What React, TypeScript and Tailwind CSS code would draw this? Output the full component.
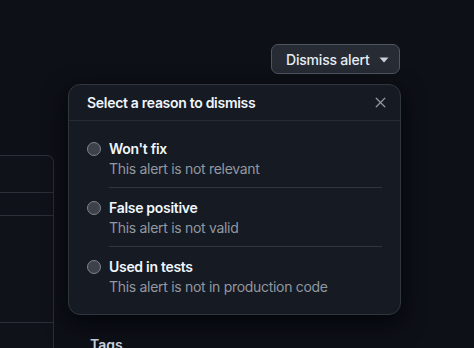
import { X } from "lucide-react";

const reasons = [
    { id: "wont_fix", title: "Won't fix", desc: "This alert is not relevant" },
    { id: "false_positive", title: "False positive", desc: "This alert is not valid" },
    { id: "used_in_tests", title: "Used in tests", desc: "This alert is not in production code" },
];

function DismissPopover() {
    return (
        <div className="absolute left-[68px] top-[84px] w-[333px] h-[231px] rounded-[12px] border border-[#30363d] bg-[#161a22] shadow-[0_8px_24px_rgba(1,4,9,0.85)] tracking-[-0.3px]">
            {/* header */}
            <div className="flex h-[36px] items-center justify-between border-b border-[#262b33] pl-[18px] pr-[10px]">
                <h3 className="text-[14px] font-semibold text-[#f0f6fc]">Select a reason to dismiss</h3>
                <button type="button" className="flex h-[20px] w-[20px] items-center justify-center text-[#9198a1]">
                    <X size={17} strokeWidth={1.8} />
                </button>
            </div>
            {/* options */}
            <div className="px-[18px] pt-[18px]">
                {reasons.map((r, k) => (
                    <label key={r.id} className="flex gap-[8px]">
                        <span className={`mt-[3px] flex h-[14px] w-[14px] shrink-0 items-center justify-center ${k === 0 ? "" : "mt-[13px]"}`}>
                            <span className="h-[14px] w-[14px] rounded-full border-[1.5px] border-[#7d848d] bg-[#3c414a]" />
                        </span>
                        <div className={`flex-1 ${k < reasons.length - 1 ? "border-b border-[#30363d] pb-[8px]" : ""} ${k === 0 ? "" : "pt-[10px]"}`}>
                            <div className="text-[14px] font-semibold leading-[20px] text-[#f0f6fc]">{r.title}</div>
                            <div className="text-[14px] leading-[20px] text-[#9198a1]">{r.desc}</div>
                        </div>
                    </label>
                ))}
            </div>
        </div>
    );
}

export default function App() {
    return (
        <div className="relative h-[348px] w-[474px] overflow-hidden bg-[#0d1016] font-['Inter',sans-serif]">
            {/* header row */}
            <div className="flex justify-end pr-[74px] pt-[44px]">
                <button type="button" className="flex h-[30px] w-[129px] items-center gap-[10px] rounded-[7px] border border-[#4f5661] bg-[#262b34] pl-[14px] text-[14px] font-medium tracking-[-0.2px] text-[#e6edf3]">
                    Dismiss alert
                    <svg width="10" height="6" viewBox="0 0 10 6" className="mt-[1px]">
                        <path d="M0.5 0.5h9L5 5.5z" fill="#c9d1d9" />
                    </svg>
                </button>
            </div>

            {/* page body */}
            <div className="flex">
                <div className="mt-[81px] w-[54px] rounded-tr-[7px] border-r border-t border-[#2a2f38] bg-[#0f1218]">
                    <div className="h-[37px] border-b border-[#2a2f38]" />
                    <div className="h-[23px] border-b border-[#2a2f38]" />
                    <div className="h-[107px] border-b border-[#2a2f38]" />
                    <div className="h-[40px]" />
                </div>
                <div className="ml-[36px] mt-[260px] text-[14px] font-semibold text-[#d1d7e0]">Tags</div>
            </div>

            <DismissPopover />
        </div>
    );
}
